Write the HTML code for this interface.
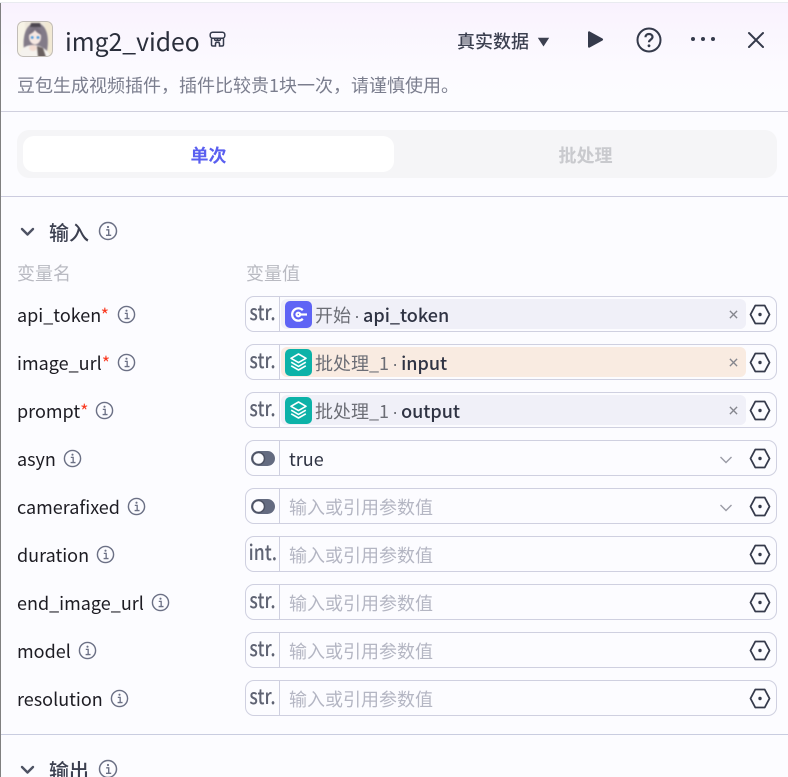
<!DOCTYPE html>
<html><head><meta charset="utf-8"><style>
html,body{margin:0;padding:0;width:788px;height:777px;overflow:hidden}
body{position:relative;background:#fcfcff;font-family:"Noto Sans CJK SC","Liberation Sans",sans-serif;color:#1c1f23}
.a{position:absolute;white-space:nowrap}
.l{left:17px;font-size:18px;line-height:24px;color:#1d1c23}
.l b{font-weight:400;color:#f93920}
.box{position:absolute;left:245px;width:530px;height:34px;border:1px solid #cfd0e0;border-radius:9px}
.box:after{content:"";position:absolute;left:33px;top:0;bottom:0;width:1px;background:#cfd0e0}
.t{position:absolute;left:0;width:33px;top:0;text-align:center;font-size:21px;line-height:31px;color:#5f6373;font-weight:500;transform:scaleX(.84)}
.ph{position:absolute;left:43px;top:0;font-size:18px;line-height:37px;color:#b4b6c3;white-space:nowrap}
.pill{position:absolute;left:35px;top:2px;width:465px;height:30px;border-radius:6px;background:#f0f0f8;font-size:18px;line-height:32px;color:#6b6d75;white-space:nowrap}
.pill i{position:absolute;left:4px;top:2px;width:27px;height:27px;border-radius:5px}
.pill span{position:absolute;left:34px;top:0}
.pill s{text-decoration:none;display:inline-block;width:12px;text-align:center;font-family:"Liberation Sans",sans-serif}
.pill em{font-style:normal;color:#2f3343;font-weight:500}
.ic{position:absolute}
</style></head><body>
<div class="a" style="left:0;top:0;width:788px;height:2px;background:#fff"></div>
<div class="a" style="left:0;top:2px;width:788px;height:1px;background:#e9ebf0"></div>
<div class="a" style="left:0;top:3px;width:788px;height:108px;background:linear-gradient(#f9f2fe,#fcfbff 65%,#fcfcff)"></div>
<div class="a" style="left:0;top:3px;width:1px;height:774px;background:#808080"></div>
<div class="a" style="left:1px;top:111px;width:787px;height:1px;background:#d0d0de"></div>
<div class="a" style="left:1px;top:196px;width:787px;height:1px;background:#ccccdf"></div>
<div class="a" style="left:1px;top:734px;width:787px;height:1px;background:#c9cde0"></div>

<svg class="ic" style="left:17px;top:21px;border-radius:6px" width="36" height="36" viewBox="0 0 36 36">
<g style="filter:blur(.7px)">
<rect width="36" height="36" fill="#efe9dc"/><rect x="0" width="8" height="36" fill="#f7f3e6"/><rect x="28" width="8" height="36" fill="#f1e8d3"/>
<path d="M7 30C5 13 10 2 19 2s14 11 11 28l-6 1H12z" fill="#837b88"/>
<path d="M14 2h9l1 4H13z" fill="#4c4650"/>
<ellipse cx="18" cy="16" rx="6" ry="7.500" fill="#f6e8e2"/><path d="M11 14c1-5 4-8 7-8s6 3 7 8c-3-1-6-3-7-5-1 2-4 4-7 5z" fill="#7a7280"/>
<circle cx="15.200" cy="16.500" r="1.400" fill="#3f94dc"/><circle cx="21" cy="16.500" r="1.400" fill="#3f94dc"/>
<path d="M2 36c1-8 6-12 14-12s15 5 18 12z" fill="#f5f2ee"/><path d="M20 25l6 2 3 9H21z" fill="#6a6060"/><ellipse cx="16" cy="27" rx="4" ry="3" fill="#f3dcd2"/>
</g>
<rect x=".5" y=".5" width="35" height="35" rx="6" fill="none" stroke="#c2bdb8"/></svg>

<div class="a" style="left:65px;top:23px;font-size:24.700px;line-height:37px;color:#2a2e3b">img2_video</div>
<svg class="ic" style="left:209px;top:31px" width="17" height="17" viewBox="0 0 17 17" fill="none" stroke="#343a4c" stroke-width="1.500"><rect x="1.200" y="1.200" width="14.600" height="6" rx="2.500"/><path d="M2.500 7.500v6q0 1.500 1.500 1.500h2.500v-2.200q0-1.500 2-1.500t2 1.500V15H13q1.500 0 1.500-1.500v-6M5.500 7.500q0 2 1.500 2t1.500-2q0 2 1.500 2t1.500-2"/></svg>
<div class="a" style="left:17px;top:73px;font-size:18px;line-height:24px;color:#7b7e8e">豆包生成视频插件，插件比较贵1块一次，请谨慎使用。</div>

<div class="a" style="left:457px;top:29px;font-size:18px;line-height:25px;color:#3c4050;font-weight:500">真实数据</div>
<svg class="ic" style="left:537px;top:37px" width="13" height="10" viewBox="0 0 13 10"><path d="M.8.800h11.400L6.500 9.500z" fill="#3c4050"/></svg>
<svg class="ic" style="left:586px;top:30px" width="18" height="19" viewBox="0 0 18 19"><path d="M2 2.500c0-1 .9-1.500 1.700-1L16.500 8.500c.8.500.8 1.500 0 2L3.700 17.500c-.8.500-1.700 0-1.700-1z" fill="#353a4b"/></svg>
<svg class="ic" style="left:635px;top:26px" width="28" height="28" viewBox="0 0 28 28" fill="none" stroke="#353a4b" stroke-width="2"><circle cx="14" cy="14" r="11.500"/><path d="M10.500 11.200c0-2 1.500-3.200 3.500-3.200s3.500 1.200 3.500 3c0 2.600-3.500 2.600-3.500 5.200" stroke-width="2.200"/><circle cx="14" cy="19.800" r="1.400" fill="#353a4b" stroke="none"/></svg>
<svg class="ic" style="left:690px;top:36px" width="26" height="6" viewBox="0 0 26 6" fill="#353a4b"><circle cx="3" cy="3" r="2"/><circle cx="13" cy="3" r="2"/><circle cx="23" cy="3" r="2"/></svg>
<svg class="ic" style="left:746px;top:30px" width="20" height="20" viewBox="0 0 20 20" stroke="#353a4b" stroke-width="2" stroke-linecap="round"><path d="M3 3l14 14M17 3L3 17"/></svg>

<div class="a" style="left:17px;top:130px;width:760px;height:48px;border-radius:12px;background:#f5f5f7"></div>
<div class="a" style="left:23px;top:136px;width:371px;height:36px;border-radius:11px;background:#fff;text-align:center;font-size:18px;line-height:38px;font-weight:700;color:#5a5ff0">单次</div>
<div class="a" style="left:400px;top:136px;width:371px;height:36px;text-align:center;font-size:18px;line-height:38px;font-weight:700;color:#c9cace">批处理</div>

<svg class="ic" style="left:20px;top:227px" width="15" height="10" viewBox="0 0 15 10" fill="none" stroke="#4d5263" stroke-width="2.400" stroke-linecap="round" stroke-linejoin="round"><path d="M2 2l5.500 5.500L13 2"/></svg>
<div class="a" style="left:49px;top:219px;font-size:20px;line-height:26px;font-weight:500;color:#3c4050">输入</div>
<svg class="ic" style="left:98px;top:221px" width="20" height="20" viewBox="0 0 20 20"><use href="#info"/></svg>
<div class="a" style="left:17px;top:261px;font-size:18px;line-height:24px;color:#b9bac2">变量名</div>
<div class="a" style="left:246px;top:261px;font-size:18px;line-height:24px;color:#b9bac2">变量值</div>

<svg width="0" height="0" style="position:absolute"><defs>
<symbol id="info" viewBox="0 0 20 20"><circle cx="10" cy="10" r="8.500" fill="none" stroke="#6b7085" stroke-width="1.500"/><circle cx="10" cy="6" r="1.100" fill="#6b7085"/><path d="M8.200 8.800H10.700V14M8 14.300h5.200" fill="none" stroke="#6b7085" stroke-width="1.400"/></symbol>
<symbol id="hex" viewBox="0 0 22 22"><path d="M6.300 2.500h9.400L20.500 11.500l-4.800 9H6.300L1.500 11.500z" fill="none" stroke="#353a4b" stroke-width="1.800" stroke-linejoin="round"/><circle cx="11" cy="11.500" r="1.700" fill="#353a4b"/></symbol>
<symbol id="x" viewBox="0 0 10 10"><path d="M1 1l8 8M9 1L1 9" stroke="#85868e" stroke-width="1.500"/></symbol>
<symbol id="chev" viewBox="0 0 14 8"><path d="M1.500 1L7 6.500 12.500 1" fill="none" stroke="#9a9ba5" stroke-width="1.400"/></symbol>
<symbol id="tog" viewBox="0 0 24 15"><rect width="24" height="15" rx="7.500" fill="#646b80"/><circle cx="7.500" cy="7.500" r="6" fill="#fcfcff" stroke="#4d5263" stroke-width="1.500"/></symbol>
<symbol id="layers" viewBox="0 0 27 27"><path d="M13.500 5l7.500 4.300-7.500 4.300L6 9.300z" fill="none" stroke="#fff" stroke-width="1.600" stroke-linejoin="round"/><path d="M6.200 13.200l7.300 4.200 7.300-4.200M6.200 16.800l7.300 4.200 7.300-4.200" fill="none" stroke="#fff" stroke-width="1.600" stroke-linejoin="round"/></symbol>
</defs></svg>

<!-- labels -->
<div class="a l" style="top:303px">api_token<b>*</b></div><svg class="ic" style="left:117px;top:305px" width="19" height="19"><use href="#info"/></svg>
<div class="a l" style="top:351px">image_url<b>*</b></div><svg class="ic" style="left:117px;top:353px" width="19" height="19"><use href="#info"/></svg>
<div class="a l" style="top:399px">prompt<b>*</b></div><svg class="ic" style="left:95px;top:401px" width="19" height="19"><use href="#info"/></svg>
<div class="a l" style="top:447px">asyn</div><svg class="ic" style="left:63px;top:449px" width="19" height="19"><use href="#info"/></svg>
<div class="a l" style="top:495px">camerafixed</div><svg class="ic" style="left:127px;top:497px" width="19" height="19"><use href="#info"/></svg>
<div class="a l" style="top:543px">duration</div><svg class="ic" style="left:96px;top:545px" width="19" height="19"><use href="#info"/></svg>
<div class="a l" style="top:591px">end_image_url</div><svg class="ic" style="left:151px;top:593px" width="19" height="19"><use href="#info"/></svg>
<div class="a l" style="top:639px">model</div><svg class="ic" style="left:78px;top:641px" width="19" height="19"><use href="#info"/></svg>
<div class="a l" style="top:687px">resolution</div><svg class="ic" style="left:110px;top:689px" width="19" height="19"><use href="#info"/></svg>

<!-- inputs -->
<div class="box" style="top:296px"><div class="t">str.</div><div class="pill"><i style="background:#5f64f5"><svg width="27" height="27" viewBox="0 0 27 27" fill="none" stroke="#fff" stroke-width="2.200"><path d="M17.800 9.200a6.200 6.200 0 1 0 0 8.600"/><circle cx="13.300" cy="13.500" r="1.800"/><path d="M15 13.500h7"/></svg></i><span>开始<s>·</s><em>api_token</em></span><svg class="ic" style="left:448px;top:11px" width="9" height="9"><use href="#x"/></svg></div></div>
<div class="box" style="top:344px"><div class="t">str.</div><div class="pill" style="background:#f9ebe1"><i style="background:#0cb2a8"><svg width="27" height="27"><use href="#layers"/></svg></i><span>批处理_1<s>·</s><em>input</em></span><svg class="ic" style="left:448px;top:11px" width="9" height="9"><use href="#x"/></svg></div></div>
<div class="box" style="top:392px"><div class="t">str.</div><div class="pill"><i style="background:#0cb2a8"><svg width="27" height="27"><use href="#layers"/></svg></i><span>批处理_1<s>·</s><em>output</em></span><svg class="ic" style="left:448px;top:11px" width="9" height="9"><use href="#x"/></svg></div></div>
<div class="box" style="top:440px"><svg class="ic" style="left:5px;top:10px" width="24" height="15"><use href="#tog"/></svg><div class="ph" style="color:#2f3343">true</div><svg class="ic" style="left:473px;top:15px" width="14" height="8"><use href="#chev"/></svg></div>
<div class="box" style="top:488px"><svg class="ic" style="left:5px;top:10px" width="24" height="15"><use href="#tog"/></svg><div class="ph">输入或引用参数值</div><svg class="ic" style="left:473px;top:15px" width="14" height="8"><use href="#chev"/></svg></div>
<div class="box" style="top:536px"><div class="t">int.</div><div class="ph">输入或引用参数值</div></div>
<div class="box" style="top:584px"><div class="t">str.</div><div class="ph">输入或引用参数值</div></div>
<div class="box" style="top:632px"><div class="t">str.</div><div class="ph">输入或引用参数值</div></div>
<div class="box" style="top:680px"><div class="t">str.</div><div class="ph">输入或引用参数值</div></div>

<svg class="ic" style="left:749px;top:303px" width="22" height="22"><use href="#hex"/></svg>
<svg class="ic" style="left:749px;top:351px" width="22" height="22"><use href="#hex"/></svg>
<svg class="ic" style="left:749px;top:399px" width="22" height="22"><use href="#hex"/></svg>
<svg class="ic" style="left:749px;top:447px" width="22" height="22"><use href="#hex"/></svg>
<svg class="ic" style="left:749px;top:495px" width="22" height="22"><use href="#hex"/></svg>
<svg class="ic" style="left:749px;top:543px" width="22" height="22"><use href="#hex"/></svg>
<svg class="ic" style="left:749px;top:591px" width="22" height="22"><use href="#hex"/></svg>
<svg class="ic" style="left:749px;top:639px" width="22" height="22"><use href="#hex"/></svg>
<svg class="ic" style="left:749px;top:687px" width="22" height="22"><use href="#hex"/></svg>

<svg class="ic" style="left:20px;top:765px" width="15" height="10" viewBox="0 0 15 10" fill="none" stroke="#4d5263" stroke-width="2.400" stroke-linecap="round" stroke-linejoin="round"><path d="M2 2l5.500 5.500L13 2"/></svg>
<div class="a" style="left:49px;top:757px;font-size:20px;line-height:26px;font-weight:500;color:#3c4050">输出</div>
<svg class="ic" style="left:98px;top:759px" width="20" height="20"><use href="#info"/></svg>
</body></html>
